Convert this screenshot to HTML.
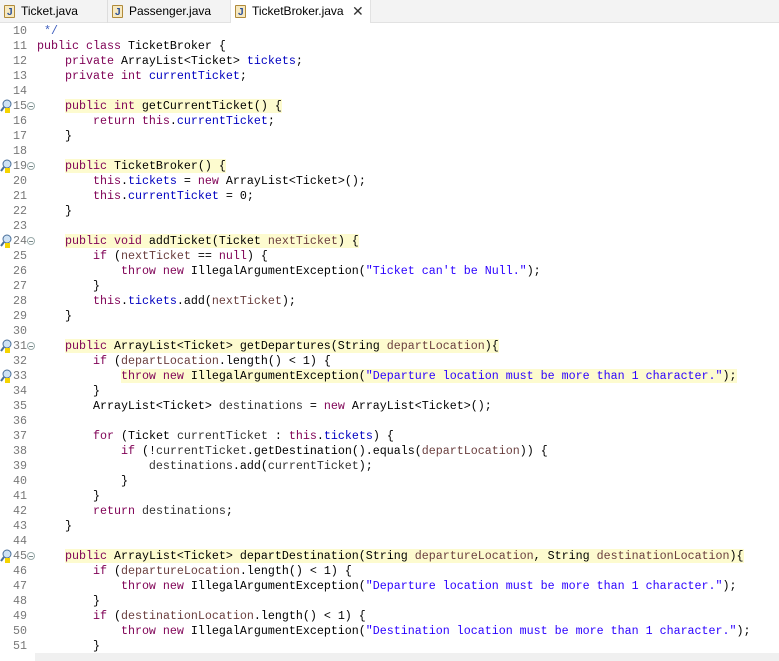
<!DOCTYPE html>
<html><head><meta charset="utf-8"><style>
*{margin:0;padding:0;box-sizing:border-box}
body{width:779px;height:661px;overflow:hidden;background:#fff;position:relative;font-family:"Liberation Sans",sans-serif}
.tabs{position:absolute;left:0;top:0;width:779px;height:23px;background:#f3f3f3;border-bottom:1px solid #e2e2e2}
.tab{position:absolute;top:0;height:23px;font-size:12px;color:#000;line-height:23px;padding-left:21px}
.tab .ic{position:absolute;left:4px;top:5px;width:11px;height:13px;border:1px solid #b08a3a;background:#f7e9c0;border-radius:1px}
.tab .ic:after{content:"J";position:absolute;left:2px;top:-5px;font-size:10px;color:#2a4f9a;font-weight:bold}
.act{background:#fff;border-right:1px solid #e2e2e2;border-left:1px solid #e2e2e2}
.sep{position:absolute;top:0;width:1px;height:23px;background:#ddd}
pre{position:absolute;left:0;top:24px;font-family:"Liberation Mono",monospace;font-size:11.67px;line-height:15px;color:#000}
.ln{position:absolute;left:0;top:24px;width:27px;text-align:right;font-family:"Liberation Mono",monospace;font-size:11.67px;line-height:15px;color:#787878}
pre{left:37px}
.k{color:#7f0055}.f{color:#0000c0}.s{color:#2a00ff}.c{color:#3f5fbf}.p{color:#6a3e3e}.l{color:#333}
.h{background:#fdfbcf}
.mk{position:absolute;left:0;width:12px;height:14px}
.fold{position:absolute;left:27px;width:8px;height:8px;border:1px solid #9aa;border-radius:50%}
.fold:after{content:"";position:absolute;left:1px;top:2.5px;width:4px;height:1px;background:#788}
.sb{position:absolute;left:35px;top:653px;width:744px;height:8px;background:#f0f0f0}
</style></head><body>
<div class="tabs">
<div class="tab" style="left:0;width:107px"><span class="ic"></span>Ticket.java</div>
<div class="sep" style="left:107px"></div>
<div class="tab" style="left:108px;width:122px"><span class="ic"></span>Passenger.java</div>
<div class="tab act" style="left:230px;width:141px"><span class="ic"></span>TicketBroker.java <span style="position:absolute;left:121px;top:0;font-size:14px;color:#333">✕</span></div>
</div>
<div class="ln">10<br>11<br>12<br>13<br>14<br>15<br>16<br>17<br>18<br>19<br>20<br>21<br>22<br>23<br>24<br>25<br>26<br>27<br>28<br>29<br>30<br>31<br>32<br>33<br>34<br>35<br>36<br>37<br>38<br>39<br>40<br>41<br>42<br>43<br>44<br>45<br>46<br>47<br>48<br>49<br>50<br>51</div>
<div class="fold" style="top:102px"></div>
<div class="fold" style="top:162px"></div>
<div class="fold" style="top:237px"></div>
<div class="fold" style="top:342px"></div>
<div class="fold" style="top:552px"></div>
<svg class="mk" style="top:99px" viewBox="0 0 12 14"><circle cx="7" cy="5" r="4" fill="#cfe3f5" stroke="#4a6f9a"/><line x1="4" y1="8" x2="1" y2="12" stroke="#4a6f9a" stroke-width="2"/><rect x="5" y="9" width="5" height="5" fill="#f5d400"/></svg>
<svg class="mk" style="top:159px" viewBox="0 0 12 14"><circle cx="7" cy="5" r="4" fill="#cfe3f5" stroke="#4a6f9a"/><line x1="4" y1="8" x2="1" y2="12" stroke="#4a6f9a" stroke-width="2"/><rect x="5" y="9" width="5" height="5" fill="#f5d400"/></svg>
<svg class="mk" style="top:234px" viewBox="0 0 12 14"><circle cx="7" cy="5" r="4" fill="#cfe3f5" stroke="#4a6f9a"/><line x1="4" y1="8" x2="1" y2="12" stroke="#4a6f9a" stroke-width="2"/><rect x="5" y="9" width="5" height="5" fill="#f5d400"/></svg>
<svg class="mk" style="top:339px" viewBox="0 0 12 14"><circle cx="7" cy="5" r="4" fill="#cfe3f5" stroke="#4a6f9a"/><line x1="4" y1="8" x2="1" y2="12" stroke="#4a6f9a" stroke-width="2"/><rect x="5" y="9" width="5" height="5" fill="#f5d400"/></svg>
<svg class="mk" style="top:369px" viewBox="0 0 12 14"><circle cx="7" cy="5" r="4" fill="#cfe3f5" stroke="#4a6f9a"/><line x1="4" y1="8" x2="1" y2="12" stroke="#4a6f9a" stroke-width="2"/><rect x="5" y="9" width="5" height="5" fill="#f5d400"/></svg>
<svg class="mk" style="top:549px" viewBox="0 0 12 14"><circle cx="7" cy="5" r="4" fill="#cfe3f5" stroke="#4a6f9a"/><line x1="4" y1="8" x2="1" y2="12" stroke="#4a6f9a" stroke-width="2"/><rect x="5" y="9" width="5" height="5" fill="#f5d400"/></svg>
<pre><span class="c"> */</span>
<span class="k">public class</span> TicketBroker {
    <span class="k">private</span> ArrayList&lt;Ticket&gt; <span class="f">tickets</span>;
    <span class="k">private int</span> <span class="f">currentTicket</span>;

    <span class="h"><span class="k">public int</span> getCurrentTicket() {</span>
        <span class="k">return this</span>.<span class="f">currentTicket</span>;
    }

    <span class="h"><span class="k">public</span> TicketBroker() {</span>
        <span class="k">this</span>.<span class="f">tickets</span> = <span class="k">new</span> ArrayList&lt;Ticket&gt;();
        <span class="k">this</span>.<span class="f">currentTicket</span> = 0;
    }

    <span class="h"><span class="k">public void</span> addTicket(Ticket <span class="p">nextTicket</span>) {</span>
        <span class="k">if</span> (<span class="p">nextTicket</span> == <span class="k">null</span>) {
            <span class="k">throw new</span> IllegalArgumentException(<span class="s">"Ticket can't be Null."</span>);
        }
        <span class="k">this</span>.<span class="f">tickets</span>.add(<span class="p">nextTicket</span>);
    }

    <span class="h"><span class="k">public</span> ArrayList&lt;Ticket&gt; getDepartures(String <span class="p">departLocation</span>){</span>
        <span class="k">if</span> (<span class="p">departLocation</span>.length() &lt; 1) {
            <span class="h"><span class="k">throw new</span> IllegalArgumentException(<span class="s">"Departure location must be more than 1 character."</span>);</span>
        }
        ArrayList&lt;Ticket&gt; <span class="l">destinations</span> = <span class="k">new</span> ArrayList&lt;Ticket&gt;();

        <span class="k">for</span> (Ticket <span class="l">currentTicket</span> : <span class="k">this</span>.<span class="f">tickets</span>) {
            <span class="k">if</span> (!<span class="l">currentTicket</span>.getDestination().equals(<span class="p">departLocation</span>)) {
                <span class="l">destinations</span>.add(<span class="l">currentTicket</span>);
            }
        }
        <span class="k">return</span> <span class="l">destinations</span>;
    }

    <span class="h"><span class="k">public</span> ArrayList&lt;Ticket&gt; departDestination(String <span class="p">departureLocation</span>, String <span class="p">destinationLocation</span>){</span>
        <span class="k">if</span> (<span class="p">departureLocation</span>.length() &lt; 1) {
            <span class="k">throw new</span> IllegalArgumentException(<span class="s">"Departure location must be more than 1 character."</span>);
        }
        <span class="k">if</span> (<span class="p">destinationLocation</span>.length() &lt; 1) {
            <span class="k">throw new</span> IllegalArgumentException(<span class="s">"Destination location must be more than 1 character."</span>);
        }</pre>
<div class="sb"></div>
</body></html>
